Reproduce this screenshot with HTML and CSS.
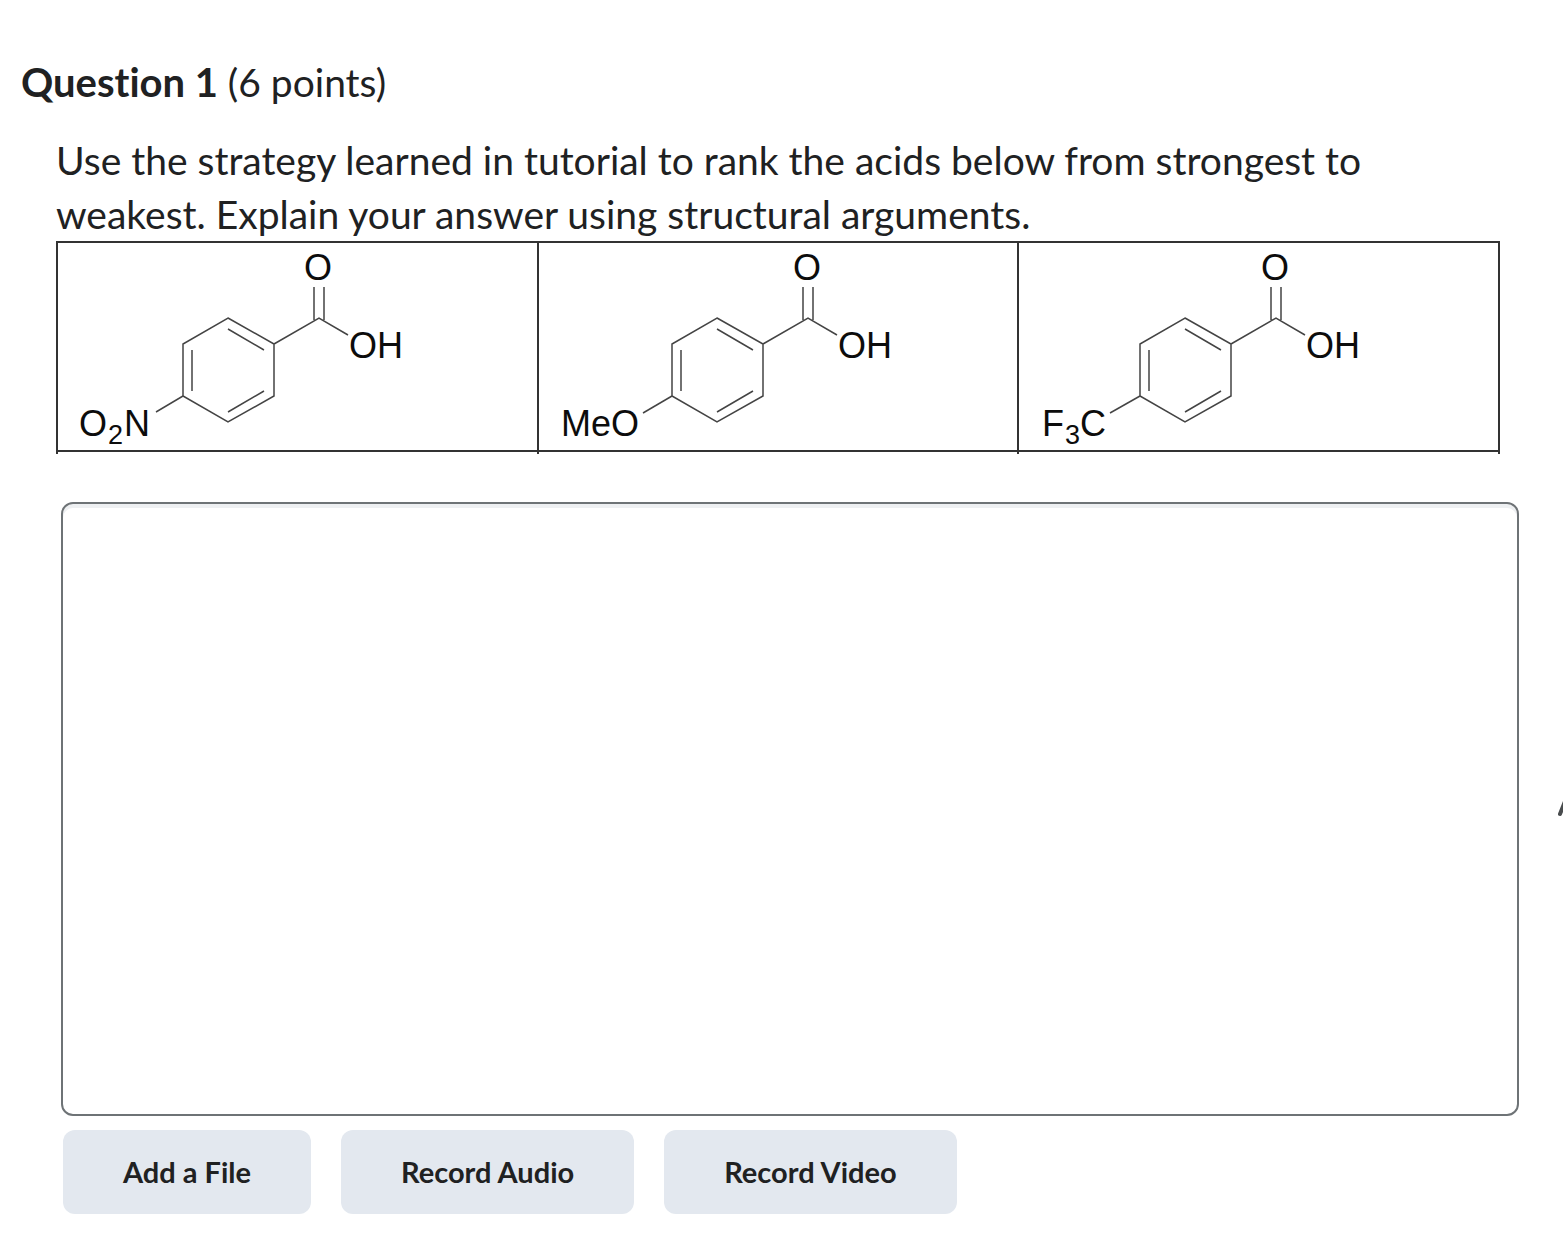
FILE: index.html
```html
<!DOCTYPE html>
<html lang="en">
<head>
  <meta charset="utf-8">
  <meta name="viewport" content="width=device-width, initial-scale=1">
  <title>Question 1</title>
  <link rel="stylesheet" href="styles.css">
</head>
<body>
  <svg class="defs" width="0" height="0" aria-hidden="true">
    <defs>
      <g id="benzoic-acid">
        <path class="bond" d="M170 75 216 101V153L170 179 125 153V101ZM170 86 206 107M206 148 170 169M134 107V148M216 101 261 75 290 92M256 44V77M266 44V77"/>
        <text class="atom" x="260" y="37" text-anchor="middle">O</text>
        <text class="atom" x="291" y="115">OH</text>
      </g>
    </defs>
  </svg>
  <main class="question">
    <h1 class="title">Question 1 <span class="points">(6 points)</span></h1>
    <div class="prompt">
      <p class="prompt-text" id="prompt">Use the strategy learned in tutorial to rank the acids below from strongest to weakest. Explain your answer using structural arguments.</p>
      <table class="acids">
        <tbody>
          <tr>
            <td>
              <svg class="molecule" width="400" height="207" viewBox="0 0 400 207" role="img" aria-label="4-nitrobenzoic acid">
                <use href="#benzoic-acid"/>
                <path class="bond" d="M125 153 98 169"/>
                <text class="atom" x="21" y="193">O</text>
                <text class="atom sub" x="50" y="201">2</text>
                <text class="atom" x="66" y="193">N</text>
              </svg>
            </td>
            <td>
              <svg class="molecule" width="400" height="207" viewBox="0 0 400 207" role="img" aria-label="4-methoxybenzoic acid">
                <use href="#benzoic-acid" x="8"/>
                <path class="bond" d="M133 153 104 170"/>
                <text class="atom" x="22" y="193">MeO</text>
              </svg>
            </td>
            <td>
              <svg class="molecule" width="400" height="207" viewBox="0 0 400 207" role="img" aria-label="4-trifluoromethylbenzoic acid">
                <use href="#benzoic-acid" x="-4"/>
                <path class="bond" d="M121 153 91 170"/>
                <text class="atom" x="23" y="193">F</text>
                <text class="atom sub" x="46" y="201">3</text>
                <text class="atom" x="61" y="193">C</text>
              </svg>
            </td>
          </tr>
          <tr class="next-row" aria-hidden="true"><td></td><td></td><td></td></tr>
        </tbody>
      </table>
    </div>
    <div class="answer">
      <textarea class="answer-box" aria-labelledby="prompt"></textarea>
      <svg class="edge-mark" width="5" height="16" viewBox="0 0 5 16" aria-hidden="true"><path d="M2 13 8 -2"/></svg>
    </div>
    <div class="actions">
      <button class="action" type="button">Add a File</button>
      <button class="action" type="button">Record Audio</button>
      <button class="action" type="button">Record Video</button>
    </div>
  </main>
</body>
</html>
```
FILE: styles.css
```css
* {
  box-sizing: border-box;
}

body {
  margin: 0;
  background: #fff;
  color: #202122;
  font-family: Lato, "Open Sans", sans-serif;
  font-variant-ligatures: none;
}

.defs {
  position: absolute;
}

.question {
  padding: 55px 0 20px;
}

.title {
  margin: 0 0 24px;
  padding-left: 21px;
  font-size: 40px;
  line-height: 54px;
  font-weight: 700;
}

.points {
  font-size: 39px;
  font-weight: 400;
}

.prompt {
  padding: 0 63px 0 56px;
}

.prompt-text {
  margin: 0;
  font-size: 39px;
  line-height: 54px;
}

.acids {
  width: 100%;
  table-layout: fixed;
  border-collapse: collapse;
}

.acids td {
  padding: 0;
  border: 2px solid #333;
}

.acids .next-row td {
  height: 3px;
  border-bottom: 0;
}

.molecule {
  display: block;
  max-width: 100%;
}

.bond {
  fill: none;
  stroke: #444;
  stroke-width: 1.5;
}

.atom {
  fill: #0c0c0c;
  font-family: "Liberation Sans", Arial, sans-serif;
  font-size: 36px;
}

.sub {
  font-size: 27px;
}

.answer {
  display: flex;
  align-items: center;
  gap: 39px;
  margin-top: 48px;
  padding-left: 61px;
}

.answer-box {
  flex: 1;
  min-width: 0;
  height: 614px;
  padding: 20px;
  border: 2px solid #6e7376;
  border-radius: 12px;
  background: #fff;
  box-shadow: inset 0 4px #eef0f2;
  color: inherit;
  font: inherit;
  font-size: 39px;
  resize: none;
}

.edge-mark {
  flex: none;
  fill: none;
  stroke: #494c4e;
  stroke-width: 4;
  stroke-linecap: round;
}

.actions {
  display: flex;
  flex-wrap: wrap;
  gap: 30px;
  margin-top: 14px;
  padding-left: 63px;
}

.action {
  padding: 20px 60px;
  border: 0;
  border-radius: 12px;
  background: #e3e8ef;
  color: inherit;
  font-family: inherit;
  font-size: 29px;
  line-height: 44px;
  font-weight: 700;
}
```
